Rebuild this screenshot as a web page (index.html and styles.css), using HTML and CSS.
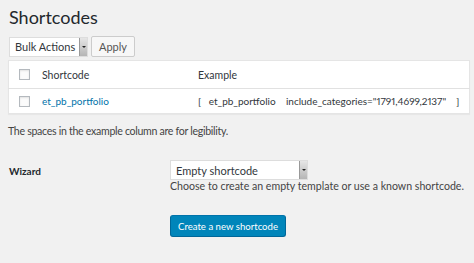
FILE: index.html
```html
<!DOCTYPE html>
<html lang="en">
<head>
  <meta charset="UTF-8">
  <title>Shortcodes</title>
  <link rel="stylesheet" href="styles.css">
</head>
<body>
  <div class="wrap">
    <h1>Shortcodes</h1>

    <div class="tablenav">
      <div class="select">
        <span>Bulk Actions</span>
        <span class="arrow"></span>
      </div>
      <button class="btn">Apply</button>
    </div>

    <table class="list">
      <thead>
        <tr>
          <th class="check"><span class="box"></span></th>
          <th class="col-name">Shortcode</th>
          <th>Example</th>
        </tr>
      </thead>
      <tbody>
        <tr>
          <td class="check"><span class="box"></span></td>
          <td class="col-name"><a href="#">et_pb_portfolio</a></td>
          <td class="example">[&nbsp;&nbsp;&nbsp;et_pb_portfolio&nbsp;&nbsp;&nbsp;&nbsp;include_categories="1791,4699,2137"&nbsp;&nbsp;&nbsp;&nbsp;]</td>
        </tr>
      </tbody>
    </table>

    <p class="note">The spaces in the example column are for legibility.</p>

    <div class="form-row">
      <div class="label">Wizard</div>
      <div class="field">
        <div class="select wide">
          <span>Empty shortcode</span>
          <span class="arrow"></span>
        </div>
        <p class="desc">Choose to create an empty template or use a known shortcode.</p>
        <button class="btn primary">Create a new shortcode</button>
      </div>
    </div>
  </div>
</body>
</html>
```

FILE: styles.css
```css
body {
  margin: 0;
  background: #f1f1f1;
  color: #444;
  font-family: Lato, sans-serif;
  font-size: 11px;
}

.wrap {
  padding: 0 8px;
}

h1 {
  margin: 0;
  padding: 3px 0 0 1px;
  font-size: 18px;
  font-weight: 400;
  color: #23282d;
  line-height: 28px;
}

.tablenav {
  display: flex;
  align-items: center;
  gap: 3px;
  margin: 5px 0 3px 1px;
}

.select {
  display: flex;
  align-items: center;
  justify-content: space-between;
  width: 79px;
  height: 20px;
  box-sizing: border-box;
  background: #fff;
  border: 1px solid #ddd;
  padding-left: 5px;
  color: #32373c;
  white-space: nowrap;
}

.select .arrow {
  width: 7px;
  height: 18px;
  background: linear-gradient(#e6e6e6, #b5b5b5);
  border-left: 1px solid #999;
  position: relative;
}

.select .arrow::after {
  content: "";
  position: absolute;
  left: 2px;
  top: 8px;
  border: 2px solid transparent;
  border-top: 2px solid #222;
  border-bottom: 0;
}

.btn {
  font-family: inherit;
  font-size: 11px;
  height: 21px;
  padding: 0 7px;
  border: 1px solid #ccc;
  border-radius: 2px;
  background: #f7f7f7;
  color: #555;
}

.list {
  width: 462px;
  table-layout: fixed;
  border-collapse: collapse;
  background: #fff;
  border: 1px solid #e5e5e5;
  box-shadow: 0 1px 1px rgba(0, 0, 0, 0.04);
  font-size: 10px;
}

.list th,
.list td {
  text-align: left;
  font-weight: 400;
  padding: 0;
  color: #32373c;
}

.list th {
  font-size: 10.5px;
}

.list thead tr {
  height: 28px;
  border-bottom: 1px solid #e1e1e1;
}

.list tbody tr {
  height: 25px;
}

.list .check {
  width: 23px;
  padding-left: 10px;
}

.list .col-name {
  width: 156px;
}

.box {
  display: block;
  width: 9px;
  height: 9px;
  border: 1px solid #b4b9be;
  background: #fbfbfb;
  box-shadow: inset 0 1px 2px rgba(0, 0, 0, 0.1);
}

.list a {
  color: #0073aa;
  text-decoration: none;
}

.list .example {
  white-space: nowrap;
  font-variant-numeric: proportional-nums;
}

.note {
  margin: 11px 0 0;
  font-size: 10.6px;
  letter-spacing: -0.3px;
  color: #444;
}

.form-row {
  display: flex;
  margin-top: 23px;
}

.label {
  flex-shrink: 0;
  width: 161px;
  padding: 5px 0 0 1px;
  font-size: 10px;
  font-weight: 700;
  color: #23282d;
}

.field .select.wide {
  width: 138px;
}

.desc {
  margin: 0;
  font-size: 10.6px;
  white-space: nowrap;
}

.btn.primary {
  margin-top: 23px;
  height: 22px;
  padding: 0 7px;
  font-size: 9.6px;
  background: #0085ba;
  border-color: #0073aa #006799 #006799;
  color: #fff;
  border-radius: 3px;
}
```
